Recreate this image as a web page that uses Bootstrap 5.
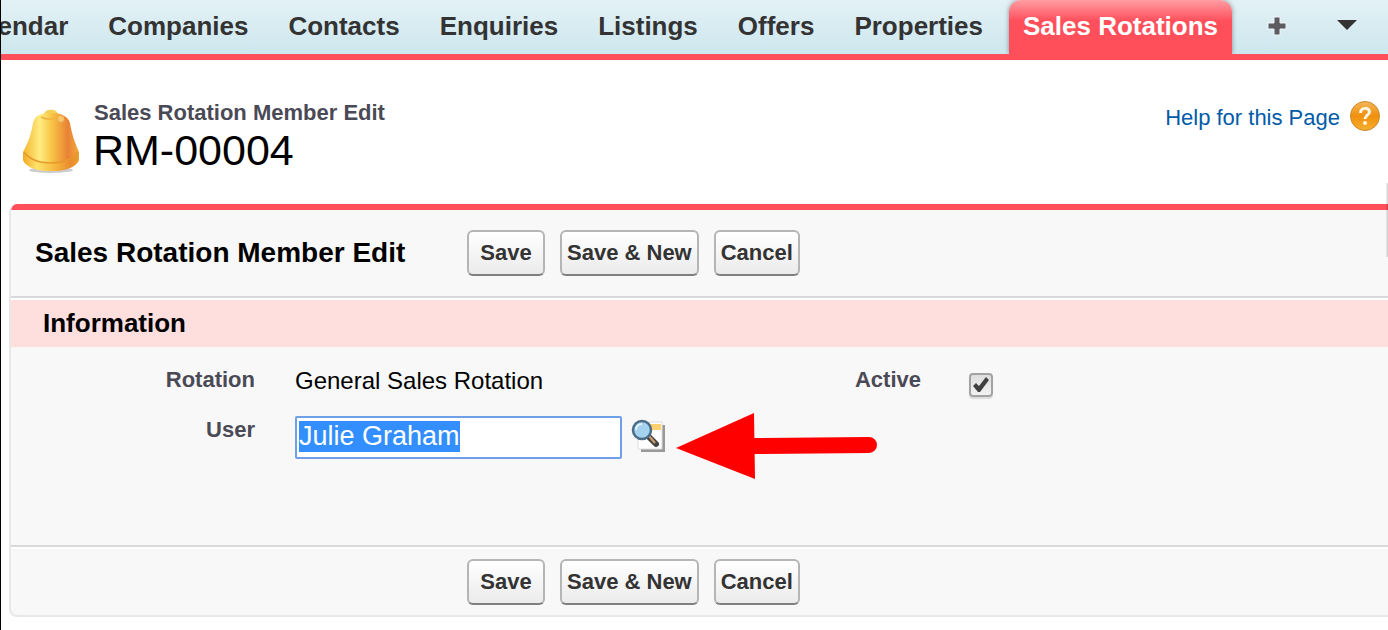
<!DOCTYPE html>
<html lang="en">
<head>
<meta charset="utf-8">
<meta name="viewport" content="width=device-width, initial-scale=1">
<title>Sales Rotation Member Edit: RM-00004</title>
<link href="https://cdn.jsdelivr.net/npm/bootstrap@5.3.0/dist/css/bootstrap.min.css" rel="stylesheet">
<style>
  :root { --accent: #ff4f5b; }
  body { font-family: "Liberation Sans", Arial, sans-serif; color: #000; background: #fff; border-left: 1px solid #000; min-height: 100vh; overflow-x: hidden; }

  .tabbar { background: linear-gradient(#e3f1f6, #cde7ee); border-bottom: 6px solid var(--accent); overflow: hidden; }
  .tabbar .nav { margin-left: -64px; }
  .tabbar .nav-link { color: #333; font-size: 26px; font-weight: 700; line-height: 52px; padding: 0 20px 2px; white-space: nowrap; }
  .tabbar .nav-link.active { color: #fff; background: linear-gradient(#ff9da3, var(--accent) 21px); border-radius: 12px 12px 0 0; margin: 0 5px 0 6px; padding: 0 14px 2px; box-shadow: 0 0 5px rgba(0,0,0,.4); }
  .tabbar .tab-icon { border: 0; background: none; padding: 0 0 4px; height: 54px; }
  .tabbar .tab-add { width: 22px; margin-left: 29px; }
  .tabbar .tab-more { width: 20px; margin-left: 49px; padding-bottom: 6px; }

  .page-head { padding: 40px 8px 30px 21px; }
  .page-titles { margin-left: 14px; }
  .page-kind { font-size: 22px; font-weight: 700; line-height: 26px; color: #4a4a56; margin: 0; }
  .page-name { font-size: 43px; line-height: 48px; font-weight: 400; margin: 0; margin-left: -1px; padding-bottom: 0; }
  .help-link { font-size: 22px; line-height: 36px; color: #015ba7; text-decoration: none; }

  .edit-panel { margin-left: 8px; background: #f8f8f8; border: 2px solid #e8e8e8; border-top: 0; border-right: 0; border-radius: 8px 0 0 8px; overflow: hidden; }
  .panel-accent { height: 6px; background: var(--accent); }
  .panel-head { height: 90px; border-bottom: 2px solid #fff; box-shadow: inset 0 -2px #d9d9d9; padding-bottom: 2px; }
  .panel-title { width: 456px; padding-left: 24px; margin: 0; font-size: 28px; line-height: 32px; font-weight: 700; }
  .panel-foot { height: 70px; border-top: 2px solid #d9d9d9; box-shadow: inset 0 2px #fff; padding: 2px 0 0 456px; }
  .button-row { gap: 15px; }
  .btn-classic { min-width: 78px; height: 46px; padding: 0 5px; font-size: 22px; font-weight: 700; line-height: 42px; color: #333; background: linear-gradient(#fff, #ebebeb); border: 2px solid #b5b5b5; border-bottom-color: #7f7f7f; border-radius: 6px; }
  .section-title { background: #ffdfdd; font-size: 26px; font-weight: 700; line-height: 47px; padding-left: 32px; margin: 0; }

  .fields { display: grid; grid-template-columns: 284px 1fr 255px 1fr; grid-template-rows: 64px 134px; }
  .field-label { font-size: 22px; line-height: 26px; font-weight: 700; color: #4a4a56; text-align: right; padding: 20px 40px 0 0; }
  .field-label.wide { padding-right: 48px; }
  .field-label.next { padding-top: 6px; }
  .field-value { font-size: 24px; line-height: 28px; padding-top: 20px; }
  .user-row { padding-top: 5px; }
  .user-box { width: 327px; height: 43px; border: 2px solid #6f9fe6; border-radius: 2px; padding: 0 2px 3px; font-size: 27px; line-height: 31px; outline: 0; background: #fff; }
  .user-box::selection { background: #338fff; color: #fff; }
  .lookup { border: 0; background: none; padding: 0 0 3px; margin-left: 9px; line-height: 0; }
  .pointer { left: 381px; top: 1px; }
  .check-classic { appearance: none; width: 24px; height: 24px; margin: 26px 0 0; border: 2px solid #a3a3a3; border-radius: 4px; background: linear-gradient(#dedede, #f2f2f2); box-shadow: 0 2px 1px #ddd; display: block; }
  .check-classic:checked { background: url("data:image/svg+xml,%3Csvg xmlns='http://www.w3.org/2000/svg' viewBox='0 0 20 20'%3E%3Cpath d='M2 11 5 8l3 3 7-9 3 3L9 17H7z' fill='%23404040'/%3E%3C/svg%3E") center / 20px, linear-gradient(#dedede, #f2f2f2); }
  .side-handle { right: 0; top: 183px; width: 2px; height: 74px; background: linear-gradient(90deg, rgba(0,0,0,.06), rgba(0,0,0,.18)); }
</style>
</head>
<body class="position-relative">
<nav class="tabbar" aria-label="Tabs">
  <div class="nav flex-nowrap align-items-center">
    <a class="nav-link" href="#">Calendar</a>
    <a class="nav-link" href="#">Companies</a>
    <a class="nav-link" href="#">Contacts</a>
    <a class="nav-link" href="#">Enquiries</a>
    <a class="nav-link" href="#">Listings</a>
    <a class="nav-link" href="#">Offers</a>
    <a class="nav-link" href="#">Properties</a>
    <a class="nav-link active" href="#" aria-current="page">Sales Rotations</a>
    <button class="tab-icon tab-add" aria-label="All tabs"><svg width="22" height="22" viewBox="0 0 22 22"><path d="M8 2h6v6h6v6h-6v6H8v-6H2V8h6z" fill="#5b5b60" stroke="#eef6f9" stroke-width="1"/></svg></button>
    <button class="tab-icon tab-more" aria-label="More tabs"><svg width="20" height="10" viewBox="0 0 20 10"><path d="M0 0h20L10 10z" fill="#333"/></svg></button>
  </div>
</nav>

<header class="page-head d-flex justify-content-between">
  <div class="d-flex align-items-end">
    <svg width="58" height="66" viewBox="0 0 58 66" aria-hidden="true">
      <defs>
        <linearGradient id="bell"><stop offset="0" stop-color="#f5b52f"/><stop offset=".3" stop-color="#ffec80"/><stop offset=".52" stop-color="#f8c345"/><stop offset=".8" stop-color="#e88235"/><stop offset="1" stop-color="#f3a93d"/></linearGradient>
        <linearGradient id="rim"><stop offset="0" stop-color="#f3a926"/><stop offset=".25" stop-color="#ffe36b"/><stop offset=".6" stop-color="#f6b33b"/><stop offset=".85" stop-color="#e98a2e"/><stop offset="1" stop-color="#eda02d"/></linearGradient>
      </defs>
      <ellipse cx="29" cy="62" rx="22" ry="3" fill="#aaa" opacity=".6"/>
      <path d="M22 7c0-7 14-7 14 0z" fill="#f2cf55"/>
      <path d="M11 15C13 7 19 5 29 5s17 3 19 10c2 12 5 20 9 29v8c-3 8-16 11-28 11S4 60 1 52v-8c5-9 8-17 10-29z" fill="url(#bell)"/>
      <path d="M1 44c7 9 18 12 28 12s22-3 28-12v8c-3 8-16 11-28 11S4 60 1 52z" fill="url(#rim)"/>
      <path d="M2 44c6 8 17 11 27 11s21-3 27-11" fill="none" stroke="#e7982a" stroke-width="1.5"/>
      <path d="M19 9c5 3 15 3 20-1" fill="none" stroke="#efb33e" stroke-width="1.5"/>
      <circle cx="39" cy="11" r="3" fill="#ffdf8c" opacity=".6"/>
    </svg>
    <div class="page-titles">
      <p class="page-kind">Sales Rotation Member Edit</p>
      <h1 class="page-name">RM-00004</h1>
    </div>
  </div>
  <div>
    <a class="help-link d-flex align-items-center" href="#">Help for this Page
      <svg class="ms-2 mb-1" width="32" height="32" viewBox="0 0 32 32" aria-hidden="true">
        <defs><linearGradient id="orb" x2="0" y2="1"><stop offset="0" stop-color="#f4b75a"/><stop offset=".5" stop-color="#f0900c"/><stop offset="1" stop-color="#f7b02f"/></linearGradient></defs>
        <circle cx="17" cy="16" r="14.5" fill="url(#orb)" stroke="#c9882c"/>
        <path d="M12.500 13c0-6 9-6 9-1 0 3-4.500 3.500-4.500 7" fill="none" stroke="#fff6e6" stroke-width="3"/><circle cx="17" cy="23" r="2" fill="#fff6e6"/>
      </svg>
    </a>
  </div>
</header>

<form class="edit-panel" onsubmit="return false">
  <div class="panel-accent"></div>
  <div class="panel-head d-flex align-items-center">
    <h2 class="panel-title">Sales Rotation Member Edit</h2>
    <div class="button-row d-flex">
      <button class="btn-classic">Save</button>
      <button class="btn-classic">Save &amp; New</button>
      <button class="btn-classic">Cancel</button>
    </div>
  </div>
  <h3 class="section-title">Information</h3>
  <div class="fields">
    <div class="field-label">Rotation</div>
    <div class="field-value">General Sales Rotation</div>
    <label class="field-label wide" for="active">Active</label>
    <div><input class="check-classic" type="checkbox" id="active" checked></div>
    <label class="field-label next" for="user">User</label>
    <div class="position-relative">
      <div class="user-row d-flex align-items-center">
        <input class="user-box" type="text" id="user" value="Julie Graham">
        <button class="lookup" type="button" aria-label="User lookup">
          <svg width="34" height="34" viewBox="0 0 34 34">
            <path d="M9 6h25v27H10z" fill="#999"/><path d="M7 3h24v27H7z" fill="#fff" stroke="#ddd"/><path d="M18 5h12v6H18z" fill="#ffd06b"/>
            <path d="m17 17 8 8" stroke="#444" stroke-width="6" stroke-linecap="round"/><path d="m18 17 6 7" stroke="#d6a06c" stroke-width="2"/>
            <circle cx="11" cy="11" r="9" fill="#a5d3ef" stroke="#4d6c86" stroke-width="2.500"/><path d="M5 11c0-4 3-6 6-6" fill="none" stroke="#e3f4fd" stroke-width="2"/>
          </svg>
        </button>
      </div>
      <svg class="pointer position-absolute" width="202" height="68" viewBox="0 0 202 68" aria-hidden="true"><path d="M0 36 78 1l1 66z" fill="red"/><path d="m78 34 115-1" stroke="red" stroke-width="16" stroke-linecap="round"/></svg>
    </div>
  </div>
  <div class="panel-foot button-row d-flex align-items-center">
    <button class="btn-classic">Save</button>
    <button class="btn-classic">Save &amp; New</button>
    <button class="btn-classic">Cancel</button>
  </div>
</form>
<div class="side-handle position-absolute"></div>
<script src="https://cdn.jsdelivr.net/npm/bootstrap@5.3.0/dist/js/bootstrap.bundle.min.js"></script>
<script>
  const user = document.getElementById('user');
  user.focus();
  user.select();
</script>
</body>
</html>
